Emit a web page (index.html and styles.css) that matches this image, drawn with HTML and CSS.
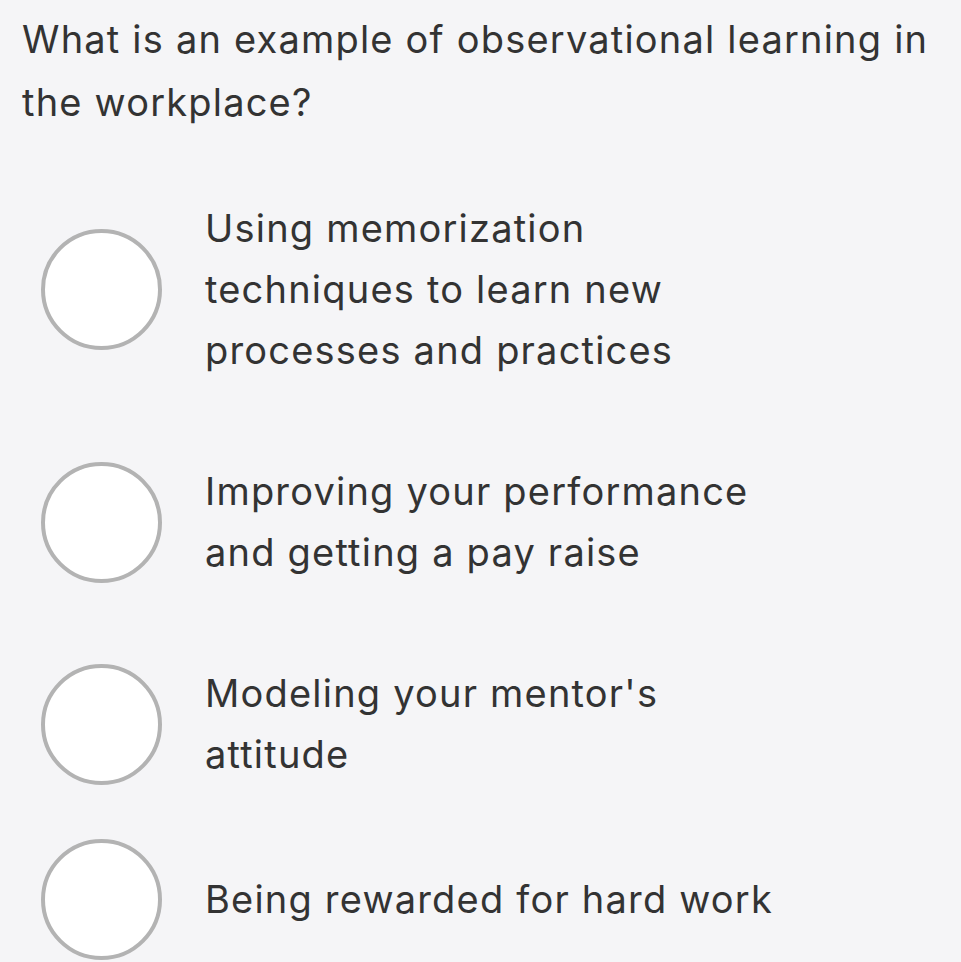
FILE: index.html
```html
<!DOCTYPE html>
<html lang="en">
<head>
  <meta charset="UTF-8">
  <meta name="viewport" content="width=device-width, initial-scale=1.0">
  <title>Question</title>
  <link rel="stylesheet" href="styles.css">
</head>
<body>

  <!-- Question -->
  <h1 class="question">What is an example of observational learning in the workplace?</h1>

  <!-- Choix de réponses -->
  <div class="options">
    <label class="option">
      <input type="radio" name="answer" class="radio">
      <span class="option-text">Using memorization techniques to learn new processes and practices</span>
    </label>
    <label class="option">
      <input type="radio" name="answer" class="radio">
      <span class="option-text">Improving your performance and getting a pay raise</span>
    </label>
    <label class="option">
      <input type="radio" name="answer" class="radio">
      <span class="option-text">Modeling your mentor's attitude</span>
    </label>
    <label class="option option-last">
      <input type="radio" name="answer" class="radio">
      <span class="option-text">Being rewarded for hard work</span>
    </label>
  </div>

</body>
</html>
```

FILE: styles.css
```css
body {
  margin: 0;
  padding: 8px 20px 0 22px;
  background-color: #f5f5f7;
  color: #333333;
  font-family: "Inter", "Liberation Sans", sans-serif;
  height: 962px;
  box-sizing: border-box;
  overflow: hidden;
}

.question {
  margin: 0;
  font-size: 38px;
  font-weight: 400;
  letter-spacing: 1.2px;
  line-height: 63px;
}

.options {
  display: flex;
  flex-direction: column;
  gap: 80px;
  margin-top: 64px;
}

.option {
  display: flex;
  align-items: center;
  gap: 43px;
  padding-left: 19px;
  cursor: pointer;
}

/* le dernier choix est plus proche */
.option-last {
  margin-top: -26px;
}

.radio {
  appearance: none;
  -webkit-appearance: none;
  flex: none;
  width: 121px;
  height: 121px;
  margin: 0;
  border-radius: 50%;
  border: 4px solid #b3b3b3;
  background-color: #ffffff;
  box-sizing: border-box;
}

.option-text {
  font-size: 38px;
  letter-spacing: 1.2px;
  line-height: 61px;
  max-width: 582px;
}
```
